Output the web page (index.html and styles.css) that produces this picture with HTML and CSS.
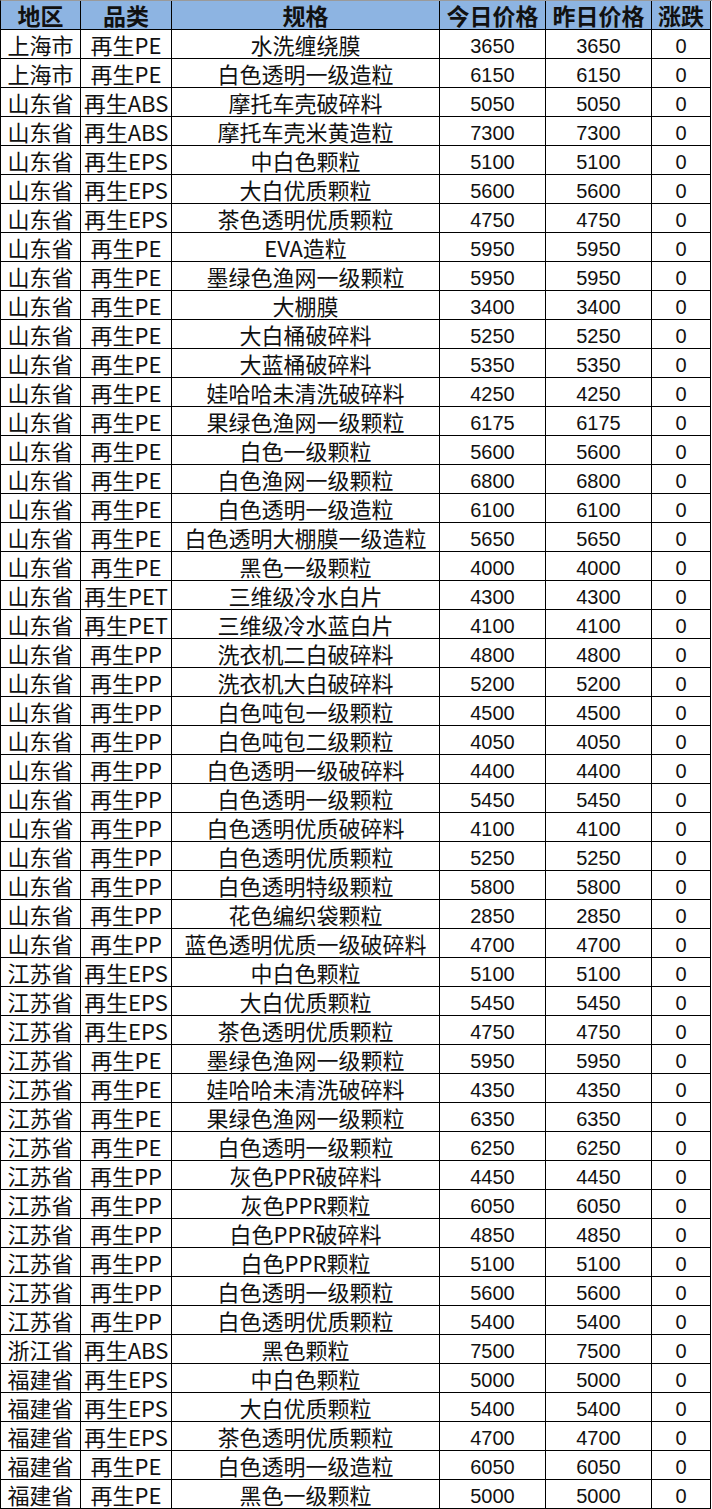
FILE: index.html
```html
<!DOCTYPE html>
<html lang="zh-CN">
<head>
<meta charset="utf-8">
<title>再生塑料价格</title>
<link rel="stylesheet" href="styles.css">
</head>
<body>
<div class="sheet">
<div class="c h">地区</div><div class="c h">品类</div><div class="c h">规格</div><div class="c h">今日价格</div><div class="c h">昨日价格</div><div class="c h">涨跌</div>
<div class="c">上海市</div><div class="c">再生PE</div><div class="c">水洗缠绕膜</div><div class="c n">3650</div><div class="c n">3650</div><div class="c n">0</div>
<div class="c">上海市</div><div class="c">再生PE</div><div class="c">白色透明一级造粒</div><div class="c n">6150</div><div class="c n">6150</div><div class="c n">0</div>
<div class="c">山东省</div><div class="c">再生ABS</div><div class="c">摩托车壳破碎料</div><div class="c n">5050</div><div class="c n">5050</div><div class="c n">0</div>
<div class="c">山东省</div><div class="c">再生ABS</div><div class="c">摩托车壳米黄造粒</div><div class="c n">7300</div><div class="c n">7300</div><div class="c n">0</div>
<div class="c">山东省</div><div class="c">再生EPS</div><div class="c">中白色颗粒</div><div class="c n">5100</div><div class="c n">5100</div><div class="c n">0</div>
<div class="c">山东省</div><div class="c">再生EPS</div><div class="c">大白优质颗粒</div><div class="c n">5600</div><div class="c n">5600</div><div class="c n">0</div>
<div class="c">山东省</div><div class="c">再生EPS</div><div class="c">茶色透明优质颗粒</div><div class="c n">4750</div><div class="c n">4750</div><div class="c n">0</div>
<div class="c">山东省</div><div class="c">再生PE</div><div class="c">EVA造粒</div><div class="c n">5950</div><div class="c n">5950</div><div class="c n">0</div>
<div class="c">山东省</div><div class="c">再生PE</div><div class="c">墨绿色渔网一级颗粒</div><div class="c n">5950</div><div class="c n">5950</div><div class="c n">0</div>
<div class="c">山东省</div><div class="c">再生PE</div><div class="c">大棚膜</div><div class="c n">3400</div><div class="c n">3400</div><div class="c n">0</div>
<div class="c">山东省</div><div class="c">再生PE</div><div class="c">大白桶破碎料</div><div class="c n">5250</div><div class="c n">5250</div><div class="c n">0</div>
<div class="c">山东省</div><div class="c">再生PE</div><div class="c">大蓝桶破碎料</div><div class="c n">5350</div><div class="c n">5350</div><div class="c n">0</div>
<div class="c">山东省</div><div class="c">再生PE</div><div class="c">娃哈哈未清洗破碎料</div><div class="c n">4250</div><div class="c n">4250</div><div class="c n">0</div>
<div class="c">山东省</div><div class="c">再生PE</div><div class="c">果绿色渔网一级颗粒</div><div class="c n">6175</div><div class="c n">6175</div><div class="c n">0</div>
<div class="c">山东省</div><div class="c">再生PE</div><div class="c">白色一级颗粒</div><div class="c n">5600</div><div class="c n">5600</div><div class="c n">0</div>
<div class="c">山东省</div><div class="c">再生PE</div><div class="c">白色渔网一级颗粒</div><div class="c n">6800</div><div class="c n">6800</div><div class="c n">0</div>
<div class="c">山东省</div><div class="c">再生PE</div><div class="c">白色透明一级造粒</div><div class="c n">6100</div><div class="c n">6100</div><div class="c n">0</div>
<div class="c">山东省</div><div class="c">再生PE</div><div class="c">白色透明大棚膜一级造粒</div><div class="c n">5650</div><div class="c n">5650</div><div class="c n">0</div>
<div class="c">山东省</div><div class="c">再生PE</div><div class="c">黑色一级颗粒</div><div class="c n">4000</div><div class="c n">4000</div><div class="c n">0</div>
<div class="c">山东省</div><div class="c">再生PET</div><div class="c">三维级冷水白片</div><div class="c n">4300</div><div class="c n">4300</div><div class="c n">0</div>
<div class="c">山东省</div><div class="c">再生PET</div><div class="c">三维级冷水蓝白片</div><div class="c n">4100</div><div class="c n">4100</div><div class="c n">0</div>
<div class="c">山东省</div><div class="c">再生PP</div><div class="c">洗衣机二白破碎料</div><div class="c n">4800</div><div class="c n">4800</div><div class="c n">0</div>
<div class="c">山东省</div><div class="c">再生PP</div><div class="c">洗衣机大白破碎料</div><div class="c n">5200</div><div class="c n">5200</div><div class="c n">0</div>
<div class="c">山东省</div><div class="c">再生PP</div><div class="c">白色吨包一级颗粒</div><div class="c n">4500</div><div class="c n">4500</div><div class="c n">0</div>
<div class="c">山东省</div><div class="c">再生PP</div><div class="c">白色吨包二级颗粒</div><div class="c n">4050</div><div class="c n">4050</div><div class="c n">0</div>
<div class="c">山东省</div><div class="c">再生PP</div><div class="c">白色透明一级破碎料</div><div class="c n">4400</div><div class="c n">4400</div><div class="c n">0</div>
<div class="c">山东省</div><div class="c">再生PP</div><div class="c">白色透明一级颗粒</div><div class="c n">5450</div><div class="c n">5450</div><div class="c n">0</div>
<div class="c">山东省</div><div class="c">再生PP</div><div class="c">白色透明优质破碎料</div><div class="c n">4100</div><div class="c n">4100</div><div class="c n">0</div>
<div class="c">山东省</div><div class="c">再生PP</div><div class="c">白色透明优质颗粒</div><div class="c n">5250</div><div class="c n">5250</div><div class="c n">0</div>
<div class="c">山东省</div><div class="c">再生PP</div><div class="c">白色透明特级颗粒</div><div class="c n">5800</div><div class="c n">5800</div><div class="c n">0</div>
<div class="c">山东省</div><div class="c">再生PP</div><div class="c">花色编织袋颗粒</div><div class="c n">2850</div><div class="c n">2850</div><div class="c n">0</div>
<div class="c">山东省</div><div class="c">再生PP</div><div class="c">蓝色透明优质一级破碎料</div><div class="c n">4700</div><div class="c n">4700</div><div class="c n">0</div>
<div class="c">江苏省</div><div class="c">再生EPS</div><div class="c">中白色颗粒</div><div class="c n">5100</div><div class="c n">5100</div><div class="c n">0</div>
<div class="c">江苏省</div><div class="c">再生EPS</div><div class="c">大白优质颗粒</div><div class="c n">5450</div><div class="c n">5450</div><div class="c n">0</div>
<div class="c">江苏省</div><div class="c">再生EPS</div><div class="c">茶色透明优质颗粒</div><div class="c n">4750</div><div class="c n">4750</div><div class="c n">0</div>
<div class="c">江苏省</div><div class="c">再生PE</div><div class="c">墨绿色渔网一级颗粒</div><div class="c n">5950</div><div class="c n">5950</div><div class="c n">0</div>
<div class="c">江苏省</div><div class="c">再生PE</div><div class="c">娃哈哈未清洗破碎料</div><div class="c n">4350</div><div class="c n">4350</div><div class="c n">0</div>
<div class="c">江苏省</div><div class="c">再生PE</div><div class="c">果绿色渔网一级颗粒</div><div class="c n">6350</div><div class="c n">6350</div><div class="c n">0</div>
<div class="c">江苏省</div><div class="c">再生PE</div><div class="c">白色透明一级颗粒</div><div class="c n">6250</div><div class="c n">6250</div><div class="c n">0</div>
<div class="c">江苏省</div><div class="c">再生PP</div><div class="c">灰色PPR破碎料</div><div class="c n">4450</div><div class="c n">4450</div><div class="c n">0</div>
<div class="c">江苏省</div><div class="c">再生PP</div><div class="c">灰色PPR颗粒</div><div class="c n">6050</div><div class="c n">6050</div><div class="c n">0</div>
<div class="c">江苏省</div><div class="c">再生PP</div><div class="c">白色PPR破碎料</div><div class="c n">4850</div><div class="c n">4850</div><div class="c n">0</div>
<div class="c">江苏省</div><div class="c">再生PP</div><div class="c">白色PPR颗粒</div><div class="c n">5100</div><div class="c n">5100</div><div class="c n">0</div>
<div class="c">江苏省</div><div class="c">再生PP</div><div class="c">白色透明一级颗粒</div><div class="c n">5600</div><div class="c n">5600</div><div class="c n">0</div>
<div class="c">江苏省</div><div class="c">再生PP</div><div class="c">白色透明优质颗粒</div><div class="c n">5400</div><div class="c n">5400</div><div class="c n">0</div>
<div class="c">浙江省</div><div class="c">再生ABS</div><div class="c">黑色颗粒</div><div class="c n">7500</div><div class="c n">7500</div><div class="c n">0</div>
<div class="c">福建省</div><div class="c">再生EPS</div><div class="c">中白色颗粒</div><div class="c n">5000</div><div class="c n">5000</div><div class="c n">0</div>
<div class="c">福建省</div><div class="c">再生EPS</div><div class="c">大白优质颗粒</div><div class="c n">5400</div><div class="c n">5400</div><div class="c n">0</div>
<div class="c">福建省</div><div class="c">再生EPS</div><div class="c">茶色透明优质颗粒</div><div class="c n">4700</div><div class="c n">4700</div><div class="c n">0</div>
<div class="c">福建省</div><div class="c">再生PE</div><div class="c">白色透明一级造粒</div><div class="c n">6050</div><div class="c n">6050</div><div class="c n">0</div>
<div class="c">福建省</div><div class="c">再生PE</div><div class="c">黑色一级颗粒</div><div class="c n">5000</div><div class="c n">5000</div><div class="c n">0</div>
</div>
</body>
</html>
```
FILE: styles.css
```css
html, body {
  margin: 0;
  padding: 0;
  background: #ffffff;
}

.sheet {
  display: grid;
  grid-template-columns: 80px 91px 268px 106px 106px 59px;
  grid-auto-rows: 29px;
  width: 711px;
  border-left: 1px solid #000000;
  border-top: 1px solid #9a9a9a;
  font-family: "Noto Sans CJK SC", "Liberation Sans", sans-serif;
  font-size: 22px;
  color: #111111;
}

.c {
  box-sizing: border-box;
  border-right: 1px solid #000000;
  border-bottom: 1px solid #000000;
  display: flex;
  align-items: center;
  justify-content: center;
  padding-top: 0;
  line-height: 1;
  white-space: nowrap;
}

.h {
  background: #8db4e2;
  font-weight: bold;
  font-size: 23px;
  padding-top: 1px;
}

.n {
  font-family: "Liberation Sans", sans-serif;
  font-size: 20px;
  padding-top: 3px;
}
```
